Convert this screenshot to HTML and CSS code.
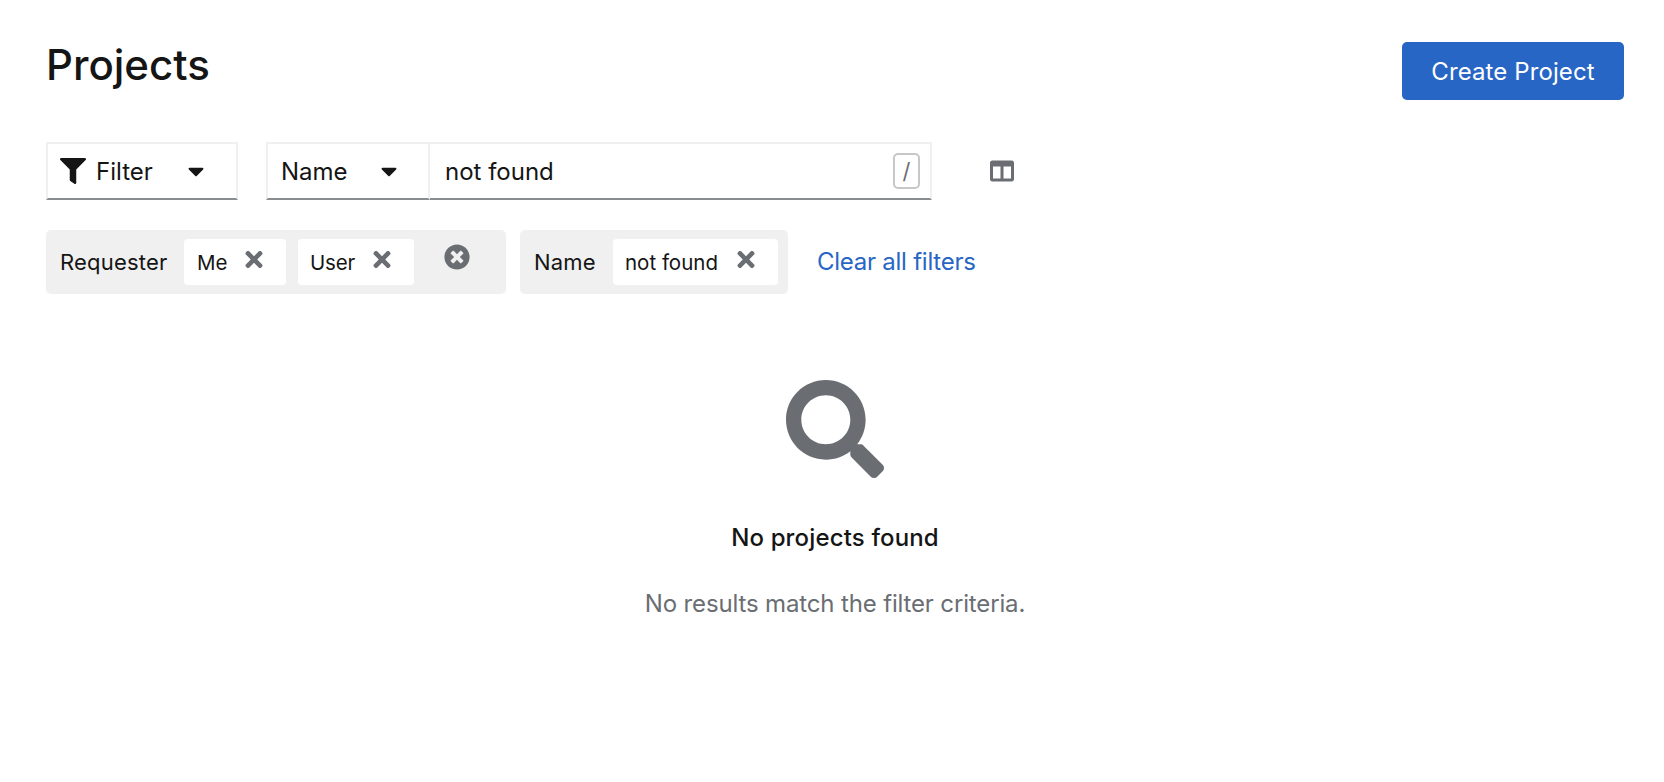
FILE: index.html
```html
<!DOCTYPE html>
<html lang="en">
<head>
    <meta charset="UTF-8">
    <meta name="viewport" content="width=device-width, initial-scale=1.0">
    <title>Projects</title>
    <link rel="stylesheet" href="styles.css">
</head>
<body>
    <div class="page">
        <header class="page-header">
            <h1>Projects</h1>
            <button class="button-primary">Create Project</button>
        </header>

        <div class="toolbar">
            <div class="select select-filter">
                <svg class="icon-filter" viewBox="0 0 512 512"><path d="M487.976 0H24.028C2.71 0-8.047 25.866 7.058 40.971L192 225.941V432c0 7.831 3.821 15.17 10.237 19.662l80 55.98C298.02 518.69 320 507.493 320 487.98V225.941l184.947-184.97C520.021 25.896 509.338 0 487.976 0z"/></svg>
                <span>Filter</span>
                <svg class="icon-caret" viewBox="0 0 320 512"><path d="M31.3 192h257.3c17.8 0 26.7 21.5 14.1 34.1L174.1 354.8c-7.8 7.8-20.5 7.8-28.3 0L17.2 226.1C4.6 213.5 13.5 192 31.3 192z"/></svg>
            </div>
            <div class="search-group">
                <div class="select select-name">
                    <span>Name</span>
                    <svg class="icon-caret" viewBox="0 0 320 512"><path d="M31.3 192h257.3c17.8 0 26.7 21.5 14.1 34.1L174.1 354.8c-7.8 7.8-20.5 7.8-28.3 0L17.2 226.1C4.6 213.5 13.5 192 31.3 192z"/></svg>
                </div>
                <div class="search-input">
                    <span>not found</span>
                    <span class="key-hint">/</span>
                </div>
            </div>
            <svg class="icon-columns" viewBox="0 0 512 512"><path d="M464 32H48C21.49 32 0 53.49 0 80v352c0 26.51 21.49 48 48 48h416c26.51 0 48-21.49 48-48V80c0-26.51-21.49-48-48-48zM224 416H64V160h160v256zm224 0H288V160h160v256z"/></svg>
        </div>

        <div class="filters">
            <div class="chip-group">
                <span class="chip-label">Requester</span>
                <div class="chip chip-me">
                    <span>Me</span>
                    <svg class="icon-times" viewBox="0 0 352 512"><path d="M242.72 256l100.07-100.07c12.28-12.28 12.28-32.19 0-44.48l-22.24-22.24c-12.28-12.28-32.19-12.28-44.48 0L176 189.28 75.93 89.21c-12.28-12.28-32.19-12.28-44.48 0L9.21 111.45c-12.28 12.28-12.28 32.19 0 44.48L109.28 256 9.21 356.07c-12.28 12.28-12.28 32.19 0 44.48l22.24 22.24c12.28 12.28 32.2 12.28 44.48 0L176 322.72l100.07 100.07c12.28 12.28 32.2 12.28 44.48 0l22.24-22.24c12.28-12.28 12.28-32.19 0-44.48L242.72 256z"/></svg>
                </div>
                <div class="chip chip-user">
                    <span>User</span>
                    <svg class="icon-times" viewBox="0 0 352 512"><path d="M242.72 256l100.07-100.07c12.28-12.28 12.28-32.19 0-44.48l-22.24-22.24c-12.28-12.28-32.19-12.28-44.48 0L176 189.28 75.93 89.21c-12.28-12.28-32.19-12.28-44.48 0L9.21 111.45c-12.28 12.28-12.28 32.19 0 44.48L109.28 256 9.21 356.07c-12.28 12.28-12.28 32.19 0 44.48l22.24 22.24c12.28 12.28 32.2 12.28 44.48 0L176 322.72l100.07 100.07c12.28 12.28 32.2 12.28 44.48 0l22.24-22.24c12.28-12.28 12.28-32.19 0-44.48L242.72 256z"/></svg>
                </div>
                <svg class="icon-times-circle" viewBox="0 0 512 512"><path d="M256 8C119 8 8 119 8 256s111 248 248 248 248-111 248-248S393 8 256 8zm121.6 313.1c4.7 4.7 4.7 12.3 0 17L338 377.6c-4.7 4.7-12.3 4.7-17 0L256 312l-65.1 65.6c-4.7 4.7-12.3 4.7-17 0L134.4 338c-4.7-4.7-4.7-12.3 0-17l65.6-65-65.6-65.1c-4.7-4.7-4.7-12.3 0-17l39.6-39.6c4.7-4.7 12.3-4.7 17 0l65 65.7 65.1-65.6c4.7-4.7 12.3-4.7 17 0l39.6 39.6c4.7 4.7 4.7 12.3 0 17L312 256l65.6 65.1z"/></svg>
            </div>
            <div class="chip-group chip-group-name">
                <span class="chip-label">Name</span>
                <div class="chip chip-query">
                    <span>not found</span>
                    <svg class="icon-times" viewBox="0 0 352 512"><path d="M242.72 256l100.07-100.07c12.28-12.28 12.28-32.19 0-44.48l-22.24-22.24c-12.28-12.28-32.19-12.28-44.48 0L176 189.28 75.93 89.21c-12.28-12.28-32.19-12.28-44.48 0L9.21 111.45c-12.28 12.28-12.28 32.19 0 44.48L109.28 256 9.21 356.07c-12.28 12.28-12.28 32.19 0 44.48l22.24 22.24c12.28 12.28 32.2 12.28 44.48 0L176 322.72l100.07 100.07c12.28 12.28 32.2 12.28 44.48 0l22.24-22.24c12.28-12.28 12.28-32.19 0-44.48L242.72 256z"/></svg>
                </div>
            </div>
            <a class="clear-link" href="#">Clear all filters</a>
        </div>

        <div class="empty-state">
            <svg class="icon-search" viewBox="0 0 512 512"><path d="M505 442.7L405.3 343c-4.5-4.5-10.6-7-17-7H372c27.6-35.3 44-79.7 44-128C416 93.1 322.9 0 208 0S0 93.1 0 208s93.1 208 208 208c48.3 0 92.7-16.4 128-44v16.3c0 6.4 2.5 12.5 7 17l99.7 99.7c9.4 9.4 24.6 9.4 33.9 0l28.3-28.3c9.4-9.4 9.4-24.6.1-34zM208 336c-70.7 0-128-57.2-128-128 0-70.7 57.2-128 128-128 70.7 0 128 57.2 128 128 0 70.7-57.2 128-128 128z"/></svg>
            <h2>No projects found</h2>
            <p>No results match the filter criteria.</p>
        </div>
    </div>
</body>
</html>
```
FILE: styles.css
```css
* {
    margin: 0;
    padding: 0;
    box-sizing: border-box;
    font-family: 'Inter', 'Noto Sans', sans-serif;
}
body {
    background: #fff;
    color: #151515;
    height: 100vh;
    overflow: hidden;
}
.page {
    padding: 42px 40px 0 46px;
}

/* Header */
.page-header {
    display: flex;
    justify-content: space-between;
    align-items: flex-start;
    height: 100px;
}
.page-header h1 {
    font-size: 42px;
    font-weight: 500;
    line-height: 46px;
}
.button-primary {
    width: 222px;
    height: 58px;
    background: #2766c5;
    color: #fff;
    font-size: 24px;
    border: none;
    border-radius: 5px;
    letter-spacing: 0.1px;
}

/* Toolbar */
.toolbar {
    display: flex;
    align-items: center;
}
.select, .search-input {
    display: flex;
    align-items: center;
    height: 58px;
    font-size: 24px;
    border: 2px solid #f0f0f0;
    border-bottom: 2px solid #8a8d90;
}
.select-filter {
    width: 192px;
    padding-left: 12px;
    margin-right: 28px;
}
.icon-filter {
    width: 26px;
    height: 26px;
    fill: #151515;
    margin-right: 10px;
}
.select-filter span {
    width: 92px;
}
.icon-caret {
    width: 16px;
    height: 26px;
    fill: #151515;
}
.search-group {
    display: flex;
    width: 666px;
}
.select-name {
    width: 164px;
    padding-left: 13px;
}
.select-name span {
    width: 100px;
}
.search-input {
    flex: 1;
    justify-content: space-between;
    padding: 0 10px 0 15px;
    border-left: none;
}
.key-hint {
    width: 27px;
    height: 36px;
    border: 2px solid #c7c7c7;
    border-radius: 5px;
    color: #6a6e73;
    font-size: 22px;
    text-align: center;
    line-height: 32px;
}
.icon-columns {
    width: 24px;
    height: 24px;
    fill: #6a6e73;
    margin-left: 58px;
}

/* Filter chips */
.filters {
    display: flex;
    align-items: center;
    margin-top: 30px;
}
.chip-group {
    display: flex;
    align-items: center;
    width: 460px;
    height: 64px;
    padding: 0 14px;
    background: #f0f0f0;
    border-radius: 5px;
}
.chip-group-name {
    width: 268px;
    margin-left: 14px;
    padding-right: 10px;
}
.chip-label {
    flex: none;
    font-size: 22px;
    width: 124px;
    letter-spacing: 0.2px;
}
.chip-group-name .chip-label {
    width: 79px;
}
.chip {
    flex: none;
    display: flex;
    align-items: center;
    justify-content: space-between;
    height: 46px;
    padding: 0 23px 0 13px;
    background: #fff;
    border-radius: 4px;
    font-size: 20.5px;
}
.chip-me {
    width: 102px;
    margin-right: 12px;
}
.chip-user {
    width: 116px;
    padding-left: 12px;
}
.chip-user span {
    letter-spacing: -0.2px;
}
.chip-query {
    width: 165px;
    padding-left: 12px;
}
.icon-times {
    width: 18px;
    height: 25px;
    fill: #6a6e73;
    margin-top: -5px;
}
.icon-times-circle {
    width: 26px;
    height: 26px;
    fill: #6a6e73;
    margin: -10px 0 0 30px;
}
.clear-link {
    margin-left: 29px;
    margin-top: -2px;
    color: #2766c5;
    font-size: 24px;
    text-decoration: none;
    letter-spacing: -0.25px;
}

/* Empty state */
.empty-state {
    display: flex;
    flex-direction: column;
    align-items: center;
    width: 1578px;
    margin-top: 86px;
}
.icon-search {
    width: 98px;
    height: 98px;
    fill: #6a6e73;
}
.empty-state h2 {
    margin-top: 43px;
    font-size: 24px;
    font-weight: 500;
    line-height: 34px;
    letter-spacing: 0.15px;
}
.empty-state p {
    margin-top: 32px;
    color: #6a6e73;
    font-size: 24px;
    line-height: 34px;
    letter-spacing: -0.15px;
}
```
